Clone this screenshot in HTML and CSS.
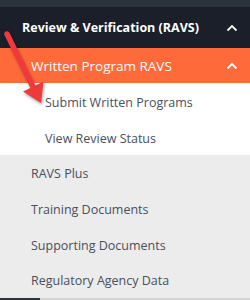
FILE: index.html
```html
<!DOCTYPE html>
<html>
<head>
<meta charset="utf-8">
<link rel="stylesheet" href="styles.css">
</head>
<body>
<div class="topbar"></div>
<nav class="menu">
  <div class="row head">
    <span>Review &amp; Verification (RAVS)</span>
    <svg class="chev" width="12" height="8" viewBox="0 0 12 8"><path d="M1.5 6.5 L6 2 L10.5 6.5" fill="none" stroke="#fff" stroke-width="1.8"/></svg>
  </div>
  <div class="row sub-head">
    <span>Written Program RAVS</span>
    <svg class="chev" width="12" height="8" viewBox="0 0 12 8"><path d="M1.5 6.5 L6 2 L10.5 6.5" fill="none" stroke="#fff" stroke-width="1.8"/></svg>
  </div>
  <div class="white">
    <div class="row leaf">Submit Written Programs</div>
    <div class="row leaf">View Review Status</div>
  </div>
  <div class="gray">
    <div class="row item">RAVS Plus</div>
    <div class="row item">Training Documents</div>
    <div class="row item">Supporting Documents</div>
    <div class="row item last">Regulatory Agency Data</div>
  </div>
  <div class="bottom"><div class="bottom-dark"></div></div>
</nav>
<svg class="arrow" width="60" height="120" viewBox="0 0 60 120">
  <line x1="7" y1="34" x2="33" y2="87" stroke="#ee3a3c" stroke-width="5.5" stroke-linecap="round"/>
  <polygon points="41,103 43.5,81.5 23,91.5" fill="#ee3a3c"/>
</svg>
</body>
</html>
```
FILE: styles.css
```css
html, body {
  margin: 0;
  padding: 0;
}
body {
  width: 250px;
  height: 300px;
  overflow: hidden;
  position: relative;
  font-family: "Open Sans", "DejaVu Sans", sans-serif;
  background: #ececec;
}
.topbar {
  height: 7px;
  background: #2c323c;
}
.menu {
  display: flex;
  flex-direction: column;
}
.row {
  display: flex;
  align-items: center;
  justify-content: space-between;
  box-sizing: border-box;
}
.head {
  height: 41px;
  background: #1a1f2a;
  color: #fff;
  font-weight: 700;
  font-size: 12.5px;
  padding: 0 12px 0 22px;
}
.sub-head {
  height: 35px;
  background: #ff6a3a;
  color: #fff;
  font-size: 13.5px;
  padding: 0 12px 0 31px;
}
.chev {
  display: block;
}
.white {
  background: #fff;
  padding-top: 1px;
}
.leaf {
  height: 36px;
  padding-left: 45px;
  color: #4a4f5c;
  font-size: 12.5px;
}
.leaf + .leaf {
  height: 35px;
  padding-top: 2px;
}
.gray {
  background: #ececec;
}
.item {
  height: 36px;
  padding-left: 31px;
  color: #4a4f5c;
  font-size: 12.5px;
}
.item.last {
  height: 35px;
}
.bottom {
  height: 2px;
  background: #d4d4d4;
  display: flex;
}
.bottom-dark {
  width: 40px;
  background: #2c323c;
}
.arrow {
  position: absolute;
  left: 0;
  top: 0;
  filter: drop-shadow(1px 2px 1.5px rgba(0,0,0,0.35));
}
```
